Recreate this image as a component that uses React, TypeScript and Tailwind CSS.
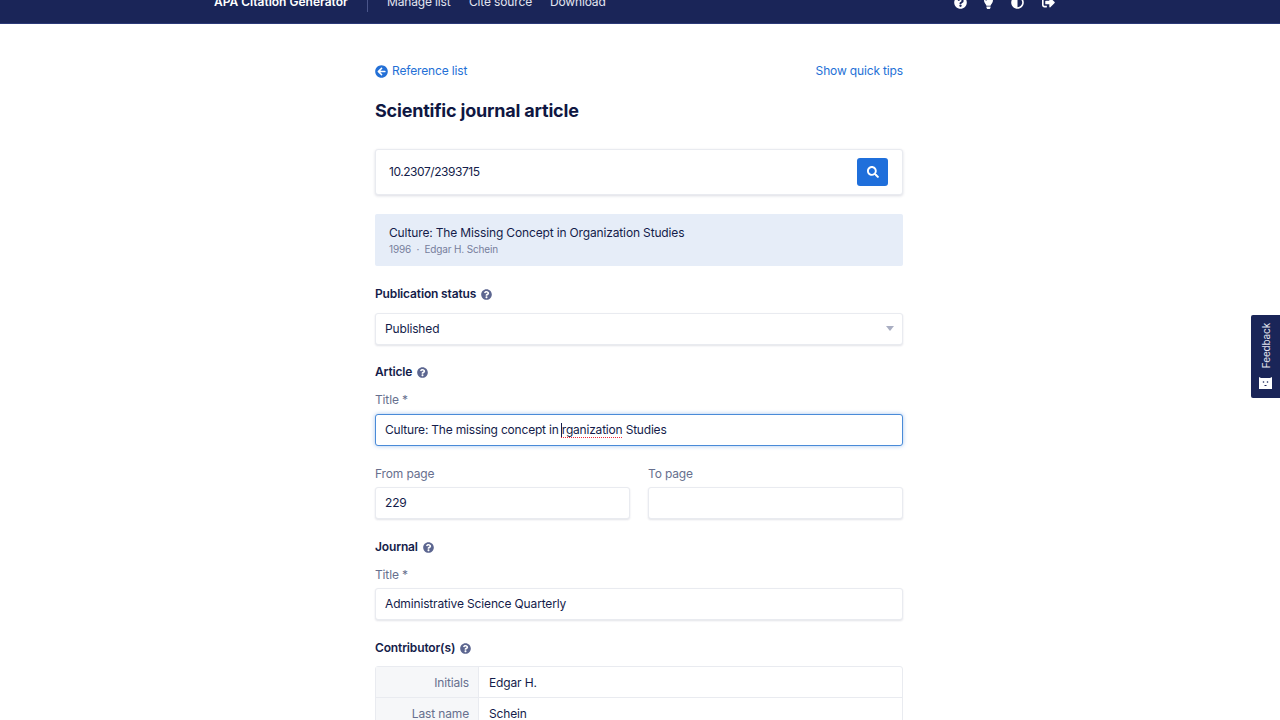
import React from "react";
import { FaArrowCircleLeft, FaSearch, FaQuestionCircle, FaLightbulb, FaAdjust, FaSignOutAlt } from "react-icons/fa";

const Help = ({ className = "" }: { className?: string }) => (
  <FaQuestionCircle className={`text-[11px] text-[#5c6690] ${className}`} />
);

const Section = ({ children, className = "" }: { children: React.ReactNode; className?: string }) => (
  <div className={`flex items-center gap-[5px] h-[16px] text-[12px] font-semibold text-[#141c4a] ${className}`}>
    {children}
    <Help />
  </div>
);

const Label = ({ children, className = "" }: { children: React.ReactNode; className?: string }) => (
  <div className={`h-[16px] flex items-center text-[12px] text-[#676f8e] ${className}`}>{children}</div>
);

const Field = ({ value = "", className = "" }: { value?: string; className?: string }) => (
  <div className={`h-[32px] px-[9px] flex items-center bg-white border border-[#e9ebf0] rounded-[3px] shadow-[0_1px_2px_rgba(15,23,66,0.12)] text-[12px] text-[#141c4a] ${className}`}>
    {value}
  </div>
);

export default function App() {
  return (
    <div className="relative h-[720px] overflow-hidden bg-white tracking-[-0.15px] font-['Inter','Noto_Sans',sans-serif]">
      <header className="h-[24px] bg-[#1a2558] border-b border-[#2c3a78] overflow-hidden">
        <div className="-mt-[20px] h-[44px] flex items-center pl-[214px] text-white text-[12px]">
          <span className="font-semibold text-[12px] w-[135px] tracking-normal whitespace-nowrap">APA Citation Generator</span>
          <span className="ml-[18px] w-px h-[20px] bg-[#4a558a]" />
          <nav className="ml-[19px] flex gap-[19px] text-[#e4e6f0]">
            <span className="w-[63px] whitespace-nowrap">Manage list</span>
            <span className="w-[62px] whitespace-nowrap">Cite source</span>
            <span className="whitespace-nowrap">Download</span>
          </nav>
          <div className="ml-[348px] flex items-center gap-[15px] text-[13px]">
            <FaQuestionCircle />
            <FaLightbulb />
            <FaAdjust className="ml-[1px]" />
            <FaSignOutAlt className="ml-[3px]" />
          </div>
        </div>
      </header>

      <main className="ml-[375px] w-[528px]">
        <div className="mt-[39px] h-[16px] flex items-center justify-between text-[12px] text-[#2470d6]">
          <span className="flex items-center gap-[4px]"><FaArrowCircleLeft className="text-[13px]" />Reference list</span>
          <span>Show quick tips</span>
        </div>
        <h1 className="mt-[17px] h-[28px] flex items-center text-[18px] font-bold tracking-[-0.2px] text-[#0f1742]">Scientific journal article</h1>

        <div className="mt-[25px] h-[46px] pl-[13px] pr-[14px] flex items-center justify-between bg-white border border-[#e9ebf0] rounded-[3px] shadow-[0_1px_3px_rgba(15,23,66,0.15)] text-[12px] tracking-[-0.45px] text-[#141c4a]">
          10.2307/2393715
          <button className="w-[31px] h-[28px] flex items-center justify-center rounded-[3px] bg-[#1f6fdb] text-white text-[12px]"><FaSearch /></button>
        </div>

        <div className="mt-[19px] h-[52px] px-[14px] flex flex-col justify-center bg-[#e6edf8] rounded-[2px]">
          <div className="text-[12px] leading-[17px] text-[#141c4a]">Culture: The Missing Concept in Organization Studies</div>
          <div className="text-[10px] leading-[16px] text-[#767e9c]">1996 &nbsp;·&nbsp; Edgar H. Schein</div>
        </div>

        <Section className="mt-[20px]">Publication status</Section>
        <div className="mt-[11px] relative">
          <Field value="Published" />
          <span className="absolute right-[9px] top-[13px] w-0 h-0 border-x-[4px] border-x-transparent border-t-[5px] border-t-[#a9aec2]" />
        </div>

        <Section className="mt-[19px]">Article</Section>
        <Label className="mt-[12px]">Title *</Label>
        <div className="mt-[6px] h-[32px] px-[9px] flex items-center bg-white border border-[#4a8bd8] rounded-[3px] shadow-[0_0_4px_rgba(36,112,214,0.4)] text-[12px] tracking-[-0.2px] text-[#141c4a] whitespace-pre">
          Culture: The missing concept in <span className="w-px h-[15px] -ml-px bg-[#141c4a]" /><span className="underline decoration-dotted underline-offset-[3px] decoration-[#f0283c]">rganization</span> Studies
        </div>

        <div className="mt-[20px] grid grid-cols-[255px_255px] gap-x-[18px]">
          <Label>From page</Label>
          <Label>To page</Label>
          <Field value="229" className="mt-[5px]" />
          <Field className="mt-[5px]" />
        </div>

        <Section className="mt-[20px]">Journal</Section>
        <Label className="mt-[12px]">Title *</Label>
        <Field value="Administrative Science Quarterly" className="mt-[5px]" />

        <Section className="mt-[20px]">Contributor(s)</Section>
        <div className="mt-[10px] border border-[#e9ebf0] rounded-[3px] text-[12px]">
          <div className="flex h-[31px] border-b border-[#e9ebf0]">
            <div className="w-[103px] bg-[#f6f7f9] border-r border-[#e9ebf0] pr-[9px] pt-px flex items-center justify-end text-[#676f8e]">Initials</div>
            <div className="pl-[10px] pt-px flex items-center text-[#141c4a]">Edgar H.</div>
          </div>
          <div className="flex h-[31px]">
            <div className="w-[103px] bg-[#f6f7f9] border-r border-[#e9ebf0] pr-[9px] pt-px flex items-center justify-end text-[#676f8e]">Last name</div>
            <div className="pl-[10px] pt-px flex items-center text-[#141c4a]">Schein</div>
          </div>
        </div>
      </main>

      <aside className="absolute right-0 top-[315px] w-[29px] h-[83px] bg-[#1a2558] rounded-l-[2px] flex flex-col items-center text-[#e4e6f0]">
        <span className="mt-[8px] text-[10px] leading-none [writing-mode:vertical-rl] rotate-180">Feedback</span>
        <svg className="mt-[9px]" width="13" height="12" viewBox="0 0 13 12">
          <path d="M0 0 L2 1 L11 1 L13 0 L13 12 L0 12 Z" fill="#fff" />
          <circle cx="4.5" cy="5" r="0.8" fill="#1a2558" />
          <circle cx="8.5" cy="5" r="0.8" fill="#1a2558" />
          <path d="M5.5 8 h2 v1 h-2 z" fill="#1a2558" />
        </svg>
      </aside>
    </div>
  );
}
